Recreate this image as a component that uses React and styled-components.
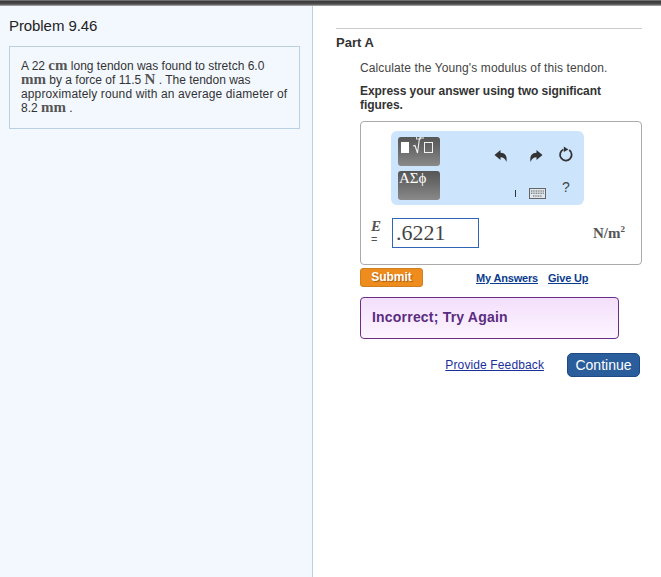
import React from 'react'
import styled, { createGlobalStyle } from 'styled-components'

const GlobalStyle = createGlobalStyle`
  html, body {
    margin: 0;
    padding: 0;
    background: #fff;
  }
  body {
    font-family: "Liberation Sans", Arial, sans-serif;
    font-size: 12px;
    color: #333;
  }
`

const Page = styled.div`
  width: 661px;
  height: 577px;
  overflow: hidden;
  display: flex;
  flex-direction: column;
`
const TopBar = styled.div`
  height: 6px;
  flex: none;
  background: linear-gradient(#8a8a8a 0, #3c3c3c 25%, #4a4a4a 60%, #777 85%, #c4c4c4 100%);
`
const Columns = styled.div`
  flex: 1;
  display: flex;
`
const LeftPane = styled.div`
  width: 313px;
  flex: none;
  box-sizing: border-box;
  padding: 11px 12px 0 9px;
  background: #f3f8ff;
  border-right: 1px solid #b9d0e3;
`
const ProblemTitle = styled.div`
  font-size: 15px;
  line-height: 18px;
  letter-spacing: -0.08px;
  color: #222;
`
const ProblemBox = styled.div`
  width: 291px;
  box-sizing: border-box;
  margin-top: 11px;
  padding: 12px 11px 13px 11px;
  border: 1px solid #b9cfe2;
  line-height: 14px;
  color: #333;
`
const WideLine = styled.span`
  letter-spacing: 0.13px;
`
const Unit = styled.span`
  font-family: "Liberation Serif", "Times New Roman", serif;
  font-weight: bold;
  font-size: 15px;
  line-height: 0;
  color: #555;
`
const RightPane = styled.div`
  flex: 1;
  padding: 22px 19px 0 23px;
`
const Rule = styled.div`
  height: 1px;
  background: #ccc;
`
const PartTitle = styled.div`
  margin-top: 6px;
  font-size: 13px;
  font-weight: bold;
  line-height: 15px;
  color: #333;
`
const PartBody = styled.div`
  margin-left: 24px;
`
const Prompt = styled.div`
  margin-top: 11px;
  line-height: 14px;
  letter-spacing: 0.11px;
  color: #444;
`
const Instruction = styled.div`
  margin-top: 9px;
  line-height: 14px;
  font-weight: bold;
  letter-spacing: -0.06px;
  color: #333;
  width: 270px;
`
const AnswerPanel = styled.div`
  margin-top: 9px;
  height: 144px;
  box-sizing: border-box;
  padding: 9px 0 0 30px;
  border: 1px solid #aaa;
  border-radius: 4px;
`
const Toolbar = styled.div`
  width: 193px;
  height: 74px;
  box-sizing: border-box;
  padding: 6px 0 0 7px;
  background: #cde4fd;
  border-radius: 6px;
  display: flex;
`
const Templates = styled.div`
  display: flex;
  flex-direction: column;
  gap: 5px;
`
const TemplateButton = styled.div`
  width: 42px;
  height: 29px;
  box-sizing: border-box;
  border-radius: 3px;
  background: linear-gradient(#565656 0, #6b6b6b 45%, #8a8a8a 100%);
  color: #fff;
  font-family: "Liberation Serif", serif;
  font-size: 15px;
  line-height: 15px;
  padding-left: 1px;
  overflow: hidden;
`
const ToolIcons = styled.div`
  margin-left: 44px;
  display: grid;
  grid-template-columns: 34px 36px 24px;
  grid-template-rows: 38px 36px;
  align-items: center;
  justify-items: center;
`
const ResetWrap = styled.div`
  display: flex;
  margin-top: -5px;
`
const Help = styled.div`
  font-size: 14px;
  color: #444;
  line-height: 16px;
  margin-top: -12px;
`
const KeyboardCell = styled.div`
  grid-column: 1 / span 2;
  justify-self: end;
  display: flex;
  align-items: center;
  gap: 13px;
  margin-right: 8px;
`
const Caret = styled.div`
  width: 1px;
  height: 7px;
  background: #333;
`
const AnswerRow = styled.div`
  margin: 13px 0 0 -20px;
  width: 254px;
  display: flex;
  align-items: center;
`
const Symbol = styled.div`
  width: 21px;
  flex: none;
  font-family: "Liberation Serif", serif;
  font-size: 15px;
  font-weight: bold;
  font-style: italic;
  line-height: 13px;
  color: #555;
`
const Equals = styled.div`
  font-family: "Liberation Sans", sans-serif;
  font-weight: normal;
  font-style: normal;
  font-size: 11px;
`
const AnswerInput = styled.div`
  width: 87px;
  height: 30px;
  box-sizing: border-box;
  border: 1px solid #2f65b7;
  padding-left: 3px;
  font-family: "Liberation Serif", serif;
  font-size: 22px;
  line-height: 28px;
  color: #444;
`
const UnitLabel = styled.div`
  margin-left: auto;
  font-family: "Liberation Serif", serif;
  font-weight: bold;
  font-size: 15px;
  color: #555;
  sup {
    font-size: 9px;
    line-height: 0;
  }
`
const ActionRow = styled.div`
  margin-top: 3px;
  display: flex;
  align-items: center;
  height: 19px;
`
const SubmitButton = styled.div`
  width: 63px;
  height: 19px;
  box-sizing: border-box;
  border: 1px solid #d07f20;
  border-radius: 3px;
  background: #ee8c1e;
  color: #fff;
  font-weight: bold;
  text-align: center;
  line-height: 17px;
  text-shadow: 1px 1px 1px #a65c0c;
`
const SmallLink = styled.a`
  font-size: 11px;
  font-weight: bold;
  letter-spacing: -0.18px;
  color: #0b3c8c;
  text-decoration: underline;
  margin-left: ${props => props.gap}px;
`
const Message = styled.div`
  margin-top: 10px;
  width: 259px;
  height: 42px;
  box-sizing: border-box;
  padding-left: 11px;
  border: 1px solid #6b2d86;
  border-radius: 4px;
  background: linear-gradient(#f3dffc, #fdf5ff);
  color: #5b2c7f;
  font-size: 14px;
  font-weight: bold;
  line-height: 38px;
  letter-spacing: 0.2px;
`
const FooterRow = styled.div`
  margin-top: 14px;
  margin-right: 2px;
  display: flex;
  align-items: center;
  justify-content: flex-end;
  gap: 23px;
`
const FeedbackLink = styled.a`
  color: #1a2f9c;
  text-decoration: underline;
  font-size: 12px;
  letter-spacing: 0.12px;
`
const ContinueButton = styled.div`
  width: 73px;
  height: 24px;
  box-sizing: border-box;
  border: 1px solid #1d4a85;
  border-radius: 5px;
  background: #2a5d9c;
  color: #fff;
  font-size: 14px;
  line-height: 22px;
  text-align: center;
`
const FlipIcon = styled.svg`
  transform: ${props => (props.$flip ? 'scaleX(-1)' : 'none')};
`

const ArrowIcon = ({ flip }) => (
  <FlipIcon $flip={flip} width="14" height="14" viewBox="0 0 14 14">
    <path d="M0.5 6 L6.5 1 V3.8 C10.8 3.8 13.6 6.6 12.4 13 C11.4 10 9.6 8.2 6.5 8.2 V11 Z" fill="#333" />
  </FlipIcon>
)

const ResetIcon = () => (
  <svg width="16" height="16" viewBox="0 0 16 16" fill="none">
    <path d="M11.2 4 A5.8 5.8 0 1 1 5.4 3.5" stroke="#333" strokeWidth="1.8" />
    <path d="M5.8 0.6 L10.4 3.4 L5.8 6 Z" fill="#333" />
  </svg>
)

const KeyboardIcon = () => (
  <svg width="17" height="11" viewBox="0 0 17 11">
    <rect x="0.5" y="0.5" width="16" height="10" fill="#dfe6ec" stroke="#666" />
    <path d="M2 3 H15 M2 5.2 H15 M4 8 H13" stroke="#555" strokeWidth="1" strokeDasharray="1 0.7" />
  </svg>
)

const RadicalIcon = () => (
  <svg width="38" height="20" viewBox="0 0 38 20" fill="none">
    <rect x="2" y="5" width="8" height="11" fill="#fff" />
    <path d="M14 9 L16 8.5 L18.5 16 L20.5 1 H25" stroke="#f2f2f2" strokeWidth="1.1" />
    <rect x="17.5" y="-2" width="4" height="4" stroke="#ddd" />
    <rect x="25.5" y="5.5" width="8" height="10" stroke="#f2f2f2" />
  </svg>
)

export default function App() {
  return (
    <Page>
      <GlobalStyle />
      <TopBar />
      <Columns>
        <LeftPane>
          <ProblemTitle>Problem 9.46</ProblemTitle>
          <ProblemBox>
            A 22 <Unit>cm</Unit> long tendon was found to stretch 6.0 <Unit>mm</Unit> by a force of 11.5 <Unit>N</Unit> . The tendon was <WideLine>approximately round with an average diameter of</WideLine> 8.2 <Unit>mm</Unit> .
          </ProblemBox>
        </LeftPane>
        <RightPane>
          <Rule />
          <PartTitle>Part A</PartTitle>
          <PartBody>
            <Prompt>Calculate the Young's modulus of this tendon.</Prompt>
            <Instruction>Express your answer using two significant figures.</Instruction>
            <AnswerPanel>
              <Toolbar>
                <Templates>
                  <TemplateButton><RadicalIcon /></TemplateButton>
                  <TemplateButton>ΑΣϕ</TemplateButton>
                </Templates>
                <ToolIcons>
                  <ArrowIcon />
                  <ArrowIcon flip />
                  <ResetWrap><ResetIcon /></ResetWrap>
                  <KeyboardCell>
                    <Caret />
                    <KeyboardIcon />
                  </KeyboardCell>
                  <Help>?</Help>
                </ToolIcons>
              </Toolbar>
              <AnswerRow>
                <Symbol>E<Equals>=</Equals></Symbol>
                <AnswerInput>.6221</AnswerInput>
                <UnitLabel>N/m<sup>2</sup></UnitLabel>
              </AnswerRow>
            </AnswerPanel>
            <ActionRow>
              <SubmitButton>Submit</SubmitButton>
              <SmallLink gap={53}>My Answers</SmallLink>
              <SmallLink gap={10}>Give Up</SmallLink>
            </ActionRow>
            <Message>Incorrect; Try Again</Message>
            <FooterRow>
              <FeedbackLink>Provide Feedback</FeedbackLink>
              <ContinueButton>Continue</ContinueButton>
            </FooterRow>
          </PartBody>
        </RightPane>
      </Columns>
    </Page>
  )
}
